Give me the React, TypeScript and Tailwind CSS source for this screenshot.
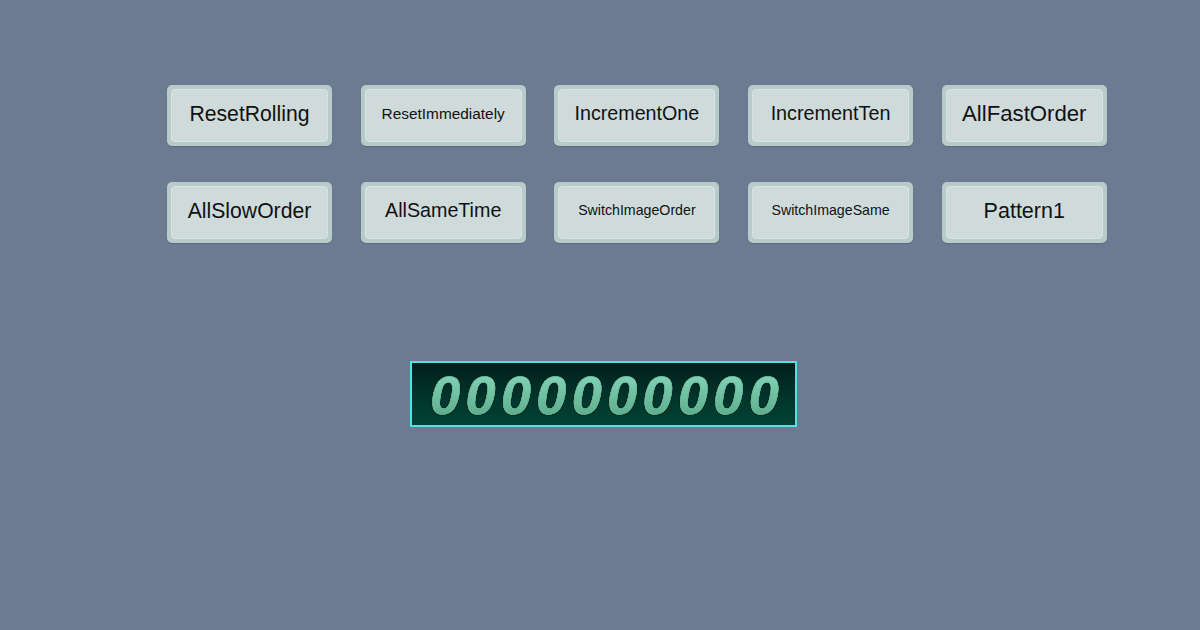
const buttons = [
  { label: "ResetRolling", size: "text-[21.2px]" },
  { label: "ResetImmediately", size: "text-[15.4px]" },
  { label: "IncrementOne", size: "text-[19.7px]" },
  { label: "IncrementTen", size: "text-[19.8px]" },
  { label: "AllFastOrder", size: "text-[22.2px]" },
  { label: "AllSlowOrder", size: "text-[21.2px]" },
  { label: "AllSameTime", size: "text-[19.7px]" },
  { label: "SwitchImageOrder", size: "text-[14.2px]" },
  { label: "SwitchImageSame", size: "text-[14.2px]" },
  { label: "Pattern1", size: "text-[21.5px]" },
];

const digits = "0000000000".split("");

const Digit = ({ value }: { value: string }) => (
  <span className="grid w-[35.4px] text-center italic font-bold text-[54px] leading-none">
    <span className="col-start-1 row-start-1 text-[#0a2820] [-webkit-text-stroke:2.4px_#0a2820]">
      {value}
    </span>
    <span className="col-start-1 row-start-1 bg-gradient-to-b from-[#88dabe] to-[#58a887] bg-clip-text text-transparent [-webkit-text-stroke:0.5px_#74c5a5]">
      {value}
    </span>
  </span>
);

const App = () => {
  return (
    <div className="w-[1200px] h-[630px] bg-[#6d7b92] font-['Liberation_Sans',Arial,sans-serif] overflow-hidden">
      <div className="pt-[85px] pl-[167px] grid grid-cols-[repeat(5,165px)] gap-x-[28.7px] gap-y-[36px]">
        {buttons.map((b) => (
          <button
            key={b.label}
            className="h-[61px] rounded-[5px] bg-[#b8caca] p-[4px] shadow-[0_1px_1px_rgba(0,0,0,0.15)]"
          >
            <div
              className={`h-full w-full rounded-[4px] bg-[#cfdbdb] border border-[#d8e3e3] flex items-center justify-center pb-[3px] text-[#111] ${b.size}`}
            >
              {b.label}
            </div>
          </button>
        ))}
      </div>

      <div className="mt-[118px] flex justify-center pl-[6px]">
        <div className="w-[387px] h-[66px] border-2 border-[#4fe3e3] bg-gradient-to-b from-[#001f1a] via-[#00332a] to-[#004332] flex items-center pl-[16px] pt-[1px]">
          {digits.map((d, i) => (
            <Digit key={i} value={d} />
          ))}
        </div>
      </div>
    </div>
  );
};

export default App;
